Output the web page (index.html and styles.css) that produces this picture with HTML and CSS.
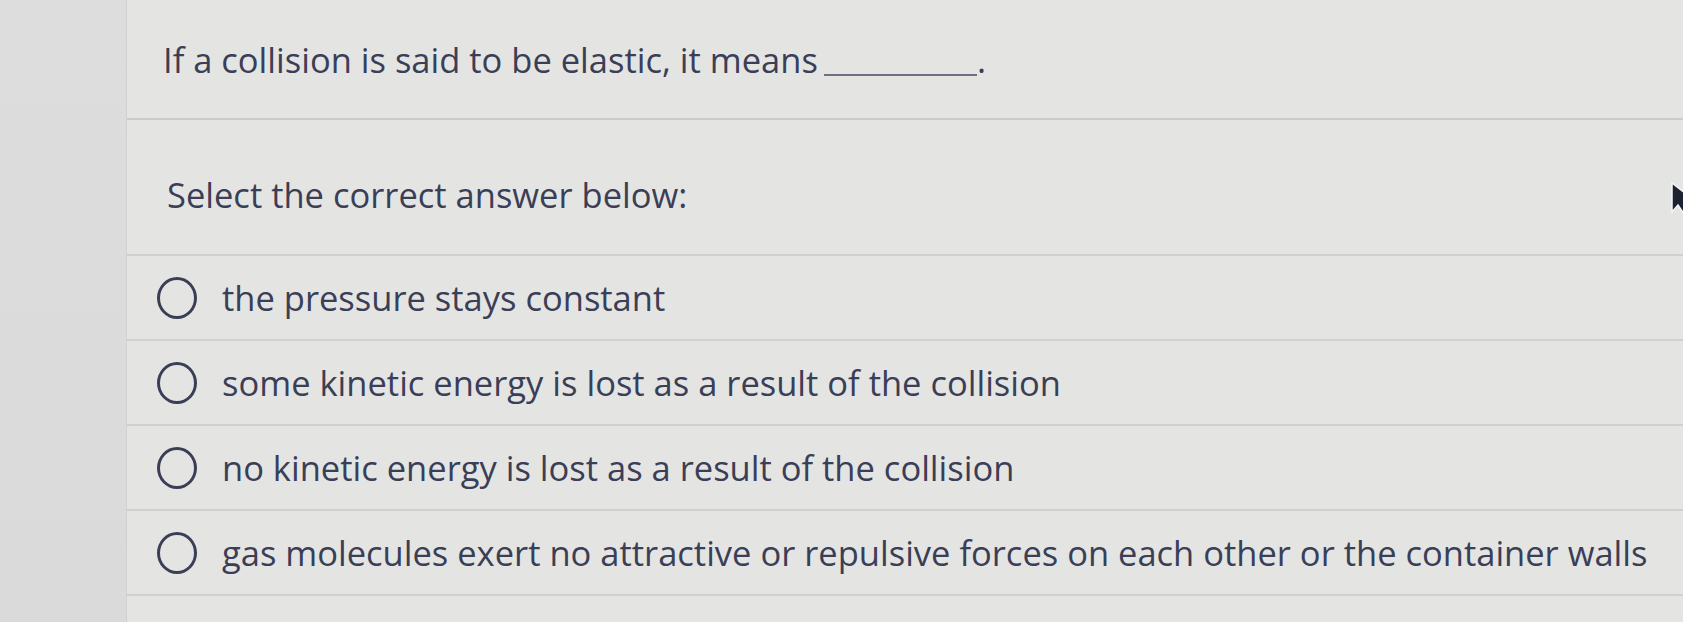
FILE: index.html
```html
<!doctype html>
<html lang="en">
  <head>
    <meta charset="UTF-8" />
    <meta name="viewport" content="width=device-width, initial-scale=1.0" />
    <title>Question</title>
    <link rel="stylesheet" href="styles.css">
  </head>
  <body>
    <div class="page">
      <aside class="side"></aside>

      <main class="panel">
        <div class="question">
          If a collision is said to be elastic, it means<span class="blank"></span>.
        </div>

        <div class="prompt">Select the correct answer below:</div>

        <ul class="choices">
          <li class="choice"><span class="radio"></span><span>the pressure stays constant</span></li>
          <li class="choice"><span class="radio"></span><span>some kinetic energy is lost as a result of the collision</span></li>
          <li class="choice"><span class="radio"></span><span>no kinetic energy is lost as a result of the collision</span></li>
          <li class="choice"><span class="radio"></span><span>gas molecules exert no attractive or repulsive forces on each other or the container walls</span></li>
        </ul>
      </main>
    </div>

    <!-- mouse pointer at the right edge -->
    <svg class="pointer" width="16" height="34" viewBox="0 0 16 34">
      <path d="M2 1 L2 30 L8 23 L14 32 L16 31 L16 12 Z" fill="#1d2233" stroke="#f4f5f7" stroke-width="1.5"/>
    </svg>
  </body>
</html>
```

FILE: styles.css
```css
body {
  margin: 0;
  font-family: "Open Sans", "Noto Sans", sans-serif;
  color: #3a3e56;
  background: #e3e4e2;
}
.page {
  display: flex;
  height: 622px;
  overflow: hidden;
}
.side {
  width: 126px;
  flex: none;
  background: linear-gradient(180deg, #dcdddc, #d9dad9);
  border-right: 1px solid #d0d1d0;
}
.panel {
  flex: 1;
  background: #e4e5e3;
}
.question,
.prompt,
.choice {
  font-size: 34.5px;
  line-height: 48px;
  white-space: nowrap;
}
.question {
  padding: 36px 0 34px 36px;
  border-bottom: 2px solid #cbccca;
}
.blank {
  display: inline-block;
  width: 153px;
  height: 4px;
  margin-left: 6px;
  border-bottom: 2px solid #6d7083;
  vertical-align: -3px;
}
.prompt {
  padding: 51px 0 35px 40px;
  border-bottom: 2px solid #d0d1cf;
}
.choices {
  list-style: none;
  margin: 0;
  padding: 0;
}
.choice {
  display: flex;
  align-items: center;
  gap: 25px;
  height: 83px;
  padding-left: 30px;
  border-bottom: 2px solid #d0d1cf;
}
.radio {
  flex: none;
  width: 34px;
  height: 36px;
  border: 3px solid #3a3e56;
  border-radius: 50%;
}
.pointer {
  position: absolute;
  left: 1670px;
  top: 182px;
}
```
